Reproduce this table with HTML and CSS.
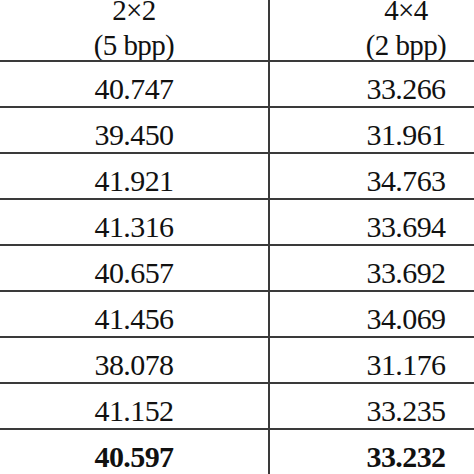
FILE: index.html
```html
<!DOCTYPE html>
<html>
<head>
<meta charset="utf-8">
<link rel="stylesheet" href="styles.css">
</head>
<body>
<div class="table">
  <div class="row head">
    <div class="cell c1"><div class="hd"><div>2×2</div><div>(5 bpp)</div></div></div>
    <div class="cell c2"><div class="hd"><div>4×4</div><div>(2 bpp)</div></div></div>
  </div>
  <div class="row"><div class="cell c1">40.747</div><div class="cell c2">33.266</div></div>
  <div class="row"><div class="cell c1">39.450</div><div class="cell c2">31.961</div></div>
  <div class="row"><div class="cell c1">41.921</div><div class="cell c2">34.763</div></div>
  <div class="row"><div class="cell c1">41.316</div><div class="cell c2">33.694</div></div>
  <div class="row"><div class="cell c1">40.657</div><div class="cell c2">33.692</div></div>
  <div class="row"><div class="cell c1">41.456</div><div class="cell c2">34.069</div></div>
  <div class="row"><div class="cell c1">38.078</div><div class="cell c2">31.176</div></div>
  <div class="row"><div class="cell c1">41.152</div><div class="cell c2">33.235</div></div>
  <div class="row last bold"><div class="cell c1">40.597</div><div class="cell c2">33.232</div></div>
</div>
</body>
</html>
```
FILE: styles.css
```css
html, body {
  margin: 0;
  padding: 0;
  background: #fff;
  overflow: hidden;
}
body {
  width: 474px;
  height: 474px;
  font-family: "Liberation Serif", "Times New Roman", serif;
  font-size: 30px;
  letter-spacing: -0.6px;
  color: #111;
}
.table {
  display: flex;
  flex-direction: column;
}
.row {
  display: flex;
  height: 44px;
  border-bottom: 2px solid #3a3a3a;
}
.row.head {
  height: 60px;
  overflow: hidden;
}
.row.last {
  border-bottom: none;
}
.cell {
  box-sizing: border-box;
  padding-top: 8px;
  line-height: 38px;
  text-align: center;
}
.head .cell {
  padding-top: 0;
}
.hd {
  margin-top: -7px;
  line-height: 35px;
  font-size: 29px;
}
.c1 {
  width: 270px;
  border-right: 2px solid #3a3a3a;
}
.c2 {
  width: 204px;
  padding-left: 68px;
}
.bold {
  font-weight: bold;
}
```
